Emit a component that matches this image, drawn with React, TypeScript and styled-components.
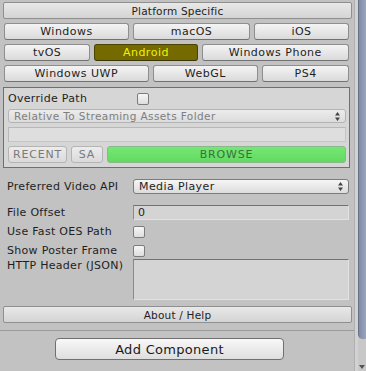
import React from 'react'
import styled, { createGlobalStyle } from 'styled-components'

const GlobalStyle = createGlobalStyle`
  html, body {
    margin: 0;
    padding: 0;
    background: #c2c2c2;
  }
  body {
    font-family: "DejaVu Sans", "Liberation Sans", sans-serif;
    font-size: 11px;
    color: #1e1e1e;
  }
`

const Window = styled.div`
  display: flex;
  width: 366px;
  height: 371px;
  overflow: hidden;
`

const Inspector = styled.div`
  flex: 1;
  display: flex;
  flex-direction: column;
  padding-top: 2px;
`

const SectionHeader = styled.div<{ top?: number }>`
  height: 15px;
  margin: ${p => p.top ?? 0}px 2px 0 3px;
  border: 1px solid #8f8f8f;
  border-radius: 2px;
  background: linear-gradient(#e8e8e8, #d4d4d4);
  display: flex;
  align-items: center;
  justify-content: center;
  font-size: 10.5px;
  letter-spacing: 0.2px;
`

const ButtonGrid = styled.div<{ cols: string }>`
  display: grid;
  grid-template-columns: ${p => p.cols};
  column-gap: 4px;
  margin: 4px 5px 0 4px;
`

const Button = styled.div<{ active?: boolean }>`
  height: 15px;
  border: 1px solid ${p => (p.active ? '#4a4400' : '#8e8e8e')};
  border-bottom-color: ${p => (p.active ? '#3a3400' : '#727272')};
  border-radius: 3px;
  background: ${p => (p.active ? '#746a00' : 'linear-gradient(#f4f4f4, #dadada)')};
  color: ${p => (p.active ? '#f2f200' : '#1e1e1e')};
  display: flex;
  align-items: center;
  justify-content: center;
  letter-spacing: 0.5px;
  white-space: nowrap;
`

const OverrideBox = styled.div`
  margin: 5px 4px 0 3px;
  border: 1px solid #6f6f6f;
  background: #d6d6d6;
  padding: 4px 3px 4px 4px;
  display: flex;
  flex-direction: column;
  gap: 4px;
`

const FieldRow = styled.div<{ label?: number; top?: number; start?: boolean }>`
  display: grid;
  grid-template-columns: ${p => p.label ?? 126}px 1fr;
  align-items: ${p => (p.start ? 'start' : 'center')};
  min-height: 12px;
  margin-top: ${p => p.top ?? 0}px;
  letter-spacing: 0.3px;
`

const Label = styled.span`
  white-space: nowrap;
`

const Checkbox = styled.div`
  width: 10px;
  height: 10px;
  border: 1px solid #7c7c7c;
  border-radius: 2px;
  background: linear-gradient(#f6f6f6, #dedede);
`

const Popup = styled.div<{ disabled?: boolean }>`
  height: ${p => (p.disabled ? 12 : 13)}px;
  border: 1px solid ${p => (p.disabled ? '#b4b4b4' : '#7c7c7c')};
  border-radius: 3px;
  background: ${p => (p.disabled ? 'linear-gradient(#ececec, #dcdcdc)' : 'linear-gradient(#f6f6f6, #dcdcdc)')};
  color: ${p => (p.disabled ? '#7e7e7e' : '#1e1e1e')};
  display: flex;
  align-items: center;
  justify-content: space-between;
  padding: 0 5px 0 5px;
  letter-spacing: 0.4px;
  font-size: ${p => (p.disabled ? 10.5 : 11)}px;
  white-space: nowrap;
`

const TextField = styled.div<{ disabled?: boolean; h?: number }>`
  height: ${p => p.h ?? 13}px;
  border: 1px solid ${p => (p.disabled ? '#c4c4c4' : '#e2e2e2')};
  border-top-color: ${p => (p.disabled ? '#b8b8b8' : '#727272')};
  border-left-color: ${p => (p.disabled ? '#b8b8b8' : '#8a8a8a')};
  background: ${p => (p.disabled ? '#dedede' : '#d4d4d4')};
  padding: 0 4px;
  display: flex;
  align-items: center;
`

const ToolRow = styled.div`
  display: grid;
  grid-template-columns: 59px 32px 1fr;
  column-gap: 4px;
`

const ToolButton = styled.div<{ green?: boolean }>`
  height: 15px;
  border: 1px solid ${p => (p.green ? '#8ab88a' : '#b4b4b4')};
  border-radius: 3px;
  background: ${p => (p.green ? 'linear-gradient(#74e874, #62da62)' : 'linear-gradient(#ececec, #dadada)')};
  color: ${p => (p.green ? '#3d6e3d' : '#7a7a7a')};
  display: flex;
  align-items: center;
  justify-content: center;
  letter-spacing: 0.8px;
  font-size: 11px;
`

const Props = styled.div`
  display: flex;
  flex-direction: column;
  margin: 11px 5px 0 7px;
`

const Footer = styled.div`
  margin-top: 7px;
  border-top: 1px solid #9a9a9a;
  display: flex;
  justify-content: center;
  padding: 7px 15px 0 0;
`

const AddButton = styled.div`
  width: 227px;
  height: 20px;
  border: 1px solid #707070;
  border-radius: 4px;
  background: linear-gradient(#f8f8f8, #dedede);
  display: flex;
  align-items: center;
  justify-content: center;
  font-size: 13px;
  letter-spacing: 0.3px;
  color: #1a1a1a;
`

const Scrollbar = styled.div`
  width: 11px;
  display: flex;
  background: #c8c8c8;
  border-left: 1px solid #b0b0b0;
`

const Gutter = styled.div`
  width: 3px;
  background: #d2d2d2;
`

const Track = styled.div`
  flex: 1;
  display: flex;
  flex-direction: column;
  position: relative;
`

const Thumb = styled.div`
  height: 339px;
  background: linear-gradient(90deg, #7f8ca4, #9aa6bc);
  border-left: 1px solid #66728a;
  border-radius: 0 0 0 5px;
`

const Arrow = styled.div`
  position: absolute;
  bottom: 2px;
  left: 1px;
  width: 0;
  height: 0;
  border-left: 3px solid transparent;
  border-right: 3px solid transparent;
  border-top: 4px solid #555;
`

const UpDown = () => (
  <svg width="5" height="9" viewBox="0 0 5 9">
    <path d="M2.5 0 L5 3.5 L0 3.5 Z M2.5 9 L5 5.5 L0 5.5 Z" fill="#444" />
  </svg>
)

const rows: { cols: string; items: string[] }[] = [
  { cols: '125fr 117fr 95fr', items: ['Windows', 'macOS', 'iOS'] },
  { cols: '86fr 103fr 147fr', items: ['tvOS', 'Android', 'Windows Phone'] },
  { cols: '145fr 106fr 87fr', items: ['Windows UWP', 'WebGL', 'PS4'] },
]

export default function App() {
  return (
    <Window>
      <GlobalStyle />
      <Inspector>
        <SectionHeader>Platform Specific</SectionHeader>
        {rows.map(r => (
          <ButtonGrid key={r.cols} cols={r.cols}>
            {r.items.map(i => (
              <Button key={i} active={i === 'Android'}>{i}</Button>
            ))}
          </ButtonGrid>
        ))}
        <OverrideBox>
          <FieldRow label={129}>
            <Label>Override Path</Label>
            <Checkbox />
          </FieldRow>
          <Popup disabled>
            <span>Relative To Streaming Assets Folder</span>
            <UpDown />
          </Popup>
          <TextField disabled />
          <ToolRow>
            <ToolButton>RECENT</ToolButton>
            <ToolButton>SA</ToolButton>
            <ToolButton green>BROWSE</ToolButton>
          </ToolRow>
        </OverrideBox>
        <Props>
          <FieldRow>
            <Label>Preferred Video API</Label>
            <Popup>
              <span>Media Player</span>
              <UpDown />
            </Popup>
          </FieldRow>
          <FieldRow top={11}>
            <Label>File Offset</Label>
            <TextField>0</TextField>
          </FieldRow>
          <FieldRow top={5}>
            <Label>Use Fast OES Path</Label>
            <Checkbox />
          </FieldRow>
          <FieldRow top={6}>
            <Label>Show Poster Frame</Label>
            <Checkbox />
          </FieldRow>
          <FieldRow top={2} start>
            <Label>HTTP Header (JSON)</Label>
            <TextField h={39} />
          </FieldRow>
        </Props>
        <SectionHeader top={6}>About / Help</SectionHeader>
        <Footer>
          <AddButton>Add Component</AddButton>
        </Footer>
      </Inspector>
      <Scrollbar>
        <Gutter />
        <Track>
          <Thumb />
          <Arrow />
        </Track>
      </Scrollbar>
    </Window>
  )
}
